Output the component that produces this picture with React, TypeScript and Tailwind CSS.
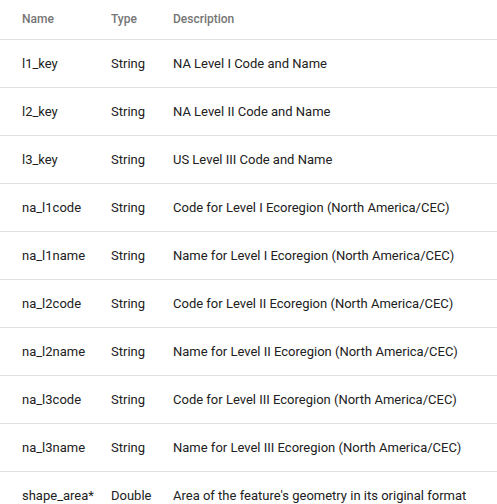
import React from "react";

type Row = { name: string; type: string; description: string };

const rows: Row[] = [
  { name: "l1_key", type: "String", description: "NA Level I Code and Name" },
  { name: "l2_key", type: "String", description: "NA Level II Code and Name" },
  { name: "l3_key", type: "String", description: "US Level III Code and Name" },
  { name: "na_l1code", type: "String", description: "Code for Level I Ecoregion (North America/CEC)" },
  { name: "na_l1name", type: "String", description: "Name for Level I Ecoregion (North America/CEC)" },
  { name: "na_l2code", type: "String", description: "Code for Level II Ecoregion (North America/CEC)" },
  { name: "na_l2name", type: "String", description: "Name for Level II Ecoregion (North America/CEC)" },
  { name: "na_l3code", type: "String", description: "Code for Level III Ecoregion (North America/CEC)" },
  { name: "na_l3name", type: "String", description: "Name for Level III Ecoregion (North America/CEC)" },
  { name: "shape_area*", type: "Double", description: "Area of the feature's geometry in its original format" },
];

const App: React.FC = () => {
  return (
    <div className="min-h-screen bg-white font-['Roboto',sans-serif] overflow-hidden">
      {/* header */}
      <div className="grid grid-cols-[111px_62px_1fr] h-[40px] items-center border-b border-[#e0e0e0] text-[12px] font-medium text-[#757575]">
        <div className="pl-[22px] pb-[2px]">Name</div>
        <div className="pb-[2px]">Type</div>
        <div className="pb-[2px]">Description</div>
      </div>

      {rows.map((row) => (
        <div
          key={row.name}
          className="grid grid-cols-[111px_62px_1fr] h-[48px] items-center border-b border-[#e0e0e0] text-[13px] text-[#212121] whitespace-nowrap"
        >
          <div className="pl-[22px]">{row.name}</div>
          <div>{row.type}</div>
          <div>{row.description}</div>
        </div>
      ))}
    </div>
  );
};

export default App;
